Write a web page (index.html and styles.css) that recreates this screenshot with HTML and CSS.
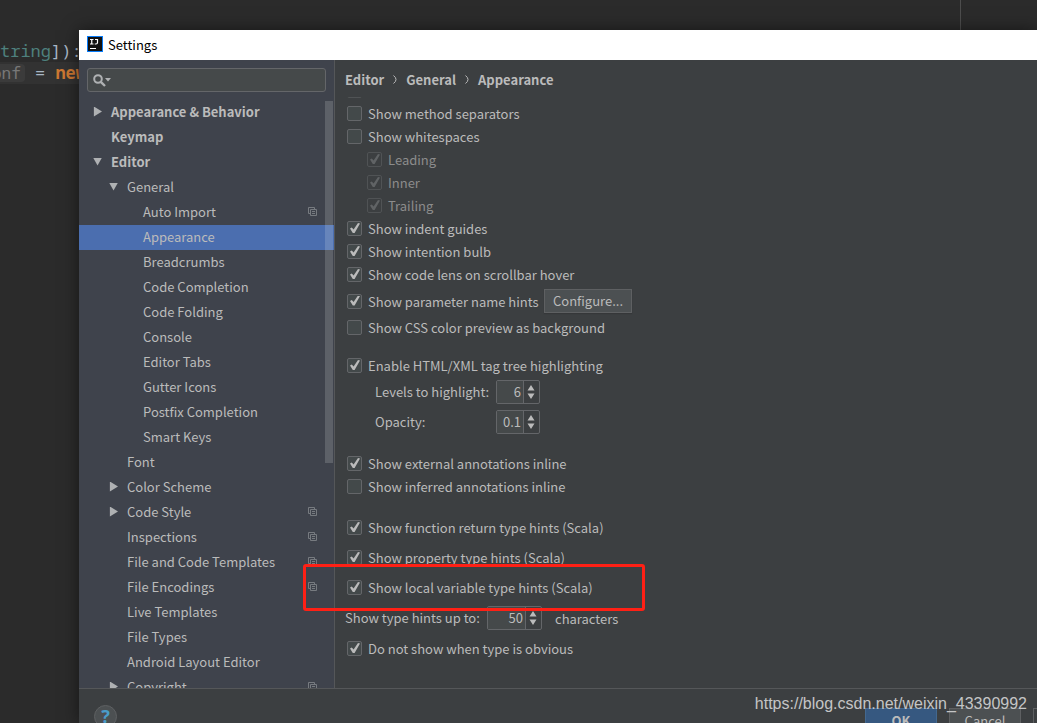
FILE: index.html
```html
<!DOCTYPE html>
<html lang="en">
<head>
    <meta charset="UTF-8">
    <meta name="viewport" content="width=device-width, initial-scale=1.0">
    <title>Settings</title>
    <link rel="stylesheet" href="styles.css">
</head>
<body>
    <svg class="symbols" aria-hidden="true">
        <symbol id="copy" viewBox="0 0 9 9">
            <path d="M2 6.500H.5V.5H6.500V2M2.500 2.500H8.500V8.500H2.500ZM4 4.500H7M4 6.500H7" fill="none" stroke="currentColor"/>
        </symbol>
        <symbol id="spin" viewBox="0 0 8 14">
            <path d="M4 0L7.500 5.500H.5ZM.5 8.500H7.500L4 14Z" fill="currentColor"/>
        </symbol>
    </svg>

    <!-- editor behind the dialog -->
    <div class="code">
        <div class="code-line"><span class="type">tring</span>]):</div>
        <div class="code-line current"><span class="folded">onf</span> = <b>new</b></div>
    </div>
    <div class="margin-guide"></div>

    <div class="window">
        <header class="titlebar">
            <svg class="logo" viewBox="0 0 16 16" aria-hidden="true">
                <rect width="16" height="16" fill="#087cfa"/>
                <rect x="1" y="1" width="14" height="14" fill="#111"/>
                <path d="M3 3.500H6.500M4.750 3.500V8M3 8H6.500M8 3.500H10.500V6.500Q10.500 8 9 8H7.700M3 12.500H9" fill="none" stroke="#fff" stroke-width="1.200"/>
            </svg>
            <span>Settings</span>
        </header>

        <div class="main">
            <nav class="sidebar">
                <div class="search">
                    <svg viewBox="0 0 18 13" aria-hidden="true">
                        <circle cx="5" cy="5" r="3.800" fill="none" stroke="#afb1b3" stroke-width="2"/>
                        <path d="M7.800 7.800L12 12" stroke="#afb1b3" stroke-width="2.400"/>
                        <path d="M12 4H18L15 7.500Z" fill="#afb1b3"/>
                    </svg>
                    <input type="text" aria-label="Search settings">
                </div>
                <ul class="tree">
                    <li class="closed top">Appearance &amp; Behavior</li>
                    <li class="top">Keymap</li>
                    <li class="open top">Editor</li>
                    <li class="open level1">General</li>
                    <li class="level2">Auto Import<svg class="copy"><use href="#copy"/></svg></li>
                    <li class="level2 selected">Appearance</li>
                    <li class="level2">Breadcrumbs</li>
                    <li class="level2">Code Completion</li>
                    <li class="level2">Code Folding</li>
                    <li class="level2">Console</li>
                    <li class="level2">Editor Tabs</li>
                    <li class="level2">Gutter Icons</li>
                    <li class="level2">Postfix Completion</li>
                    <li class="level2">Smart Keys</li>
                    <li class="level1">Font</li>
                    <li class="closed level1">Color Scheme</li>
                    <li class="closed level1">Code Style<svg class="copy"><use href="#copy"/></svg></li>
                    <li class="level1">Inspections<svg class="copy"><use href="#copy"/></svg></li>
                    <li class="level1">File and Code Templates<svg class="copy"><use href="#copy"/></svg></li>
                    <li class="level1">File Encodings<svg class="copy"><use href="#copy"/></svg></li>
                    <li class="level1">Live Templates</li>
                    <li class="level1">File Types</li>
                    <li class="level1">Android Layout Editor</li>
                    <li class="closed level1">Copyright<svg class="copy"><use href="#copy"/></svg></li>
                </ul>
                <div class="scrollbar"></div>
            </nav>

            <main class="content">
                <h1 class="breadcrumb">
                    <span>Editor</span><svg viewBox="0 0 4 9"><path d="M.5 .5Q3 2.500 3 4.500T.5 8.500"/></svg>
                    <span>General</span><svg viewBox="0 0 4 9"><path d="M.5 .5Q3 2.500 3 4.500T.5 8.500"/></svg>
                    <span>Appearance</span>
                </h1>
                <form class="options">
                    <div class="group scrolled">
                        <label class="check"><input type="checkbox" disabled></label>
                        <label class="check"><input type="checkbox">Show method separators</label>
                        <label class="check"><input type="checkbox">Show whitespaces</label>
                        <label class="check nested"><input type="checkbox" checked disabled>Leading</label>
                        <label class="check nested"><input type="checkbox" checked disabled>Inner</label>
                        <label class="check nested"><input type="checkbox" checked disabled>Trailing</label>
                        <label class="check"><input type="checkbox" checked>Show indent guides</label>
                        <label class="check"><input type="checkbox" checked>Show intention bulb</label>
                        <label class="check"><input type="checkbox" checked>Show code lens on scrollbar hover</label>
                        <div class="hints">
                            <label class="check"><input type="checkbox" checked>Show parameter name hints</label>
                            <button type="button" class="configure">Configure...</button>
                        </div>
                        <label class="check"><input type="checkbox">Show CSS color preview as background</label>
                    </div>

                    <div class="group">
                        <label class="check"><input type="checkbox" checked>Enable HTML/XML tag tree highlighting</label>
                        <div class="fields">
                            <label for="levels">Levels to highlight:</label>
                            <span class="spinner"><input type="text" id="levels" value="6"><svg><use href="#spin"/></svg></span>
                            <label for="opacity">Opacity:</label>
                            <span class="spinner"><input type="text" id="opacity" value="0.1"><svg><use href="#spin"/></svg></span>
                        </div>
                    </div>

                    <div class="group">
                        <label class="check"><input type="checkbox" checked>Show external annotations inline</label>
                        <label class="check"><input type="checkbox">Show inferred annotations inline</label>
                    </div>

                    <div class="group spaced">
                        <label class="check"><input type="checkbox" checked>Show function return type hints (Scala)</label>
                        <label class="check"><input type="checkbox" checked>Show property type hints (Scala)</label>
                        <label class="check"><input type="checkbox" checked>Show local variable type hints (Scala)</label>
                        <div class="limit">
                            <label for="limit">Show type hints up to:</label>
                            <span class="spinner wide"><input type="text" id="limit" value="50"><svg><use href="#spin"/></svg></span>
                            <span>characters</span>
                        </div>
                        <label class="check"><input type="checkbox" checked>Do not show when type is obvious</label>
                    </div>
                </form>
            </main>
        </div>

        <footer class="footer">
            <button type="button" class="help">?</button>
            <button type="button" class="action primary">OK</button>
            <button type="button" class="action">Cancel</button>
            <button type="button" class="action apply" aria-label="Apply"></button>
        </footer>

        <div class="marker"></div>
    </div>

    <div class="watermark">https://blog.csdn.net/weixin_43390992</div>
</body>
</html>
```

FILE: styles.css
```css
:root {
    --bg: #3c3f41;
    --sidebar: #3f434c;
    --field: #45494a;
    --line: #555759;
    --border: #646669;
    --text: #bbbbbb;
    --muted: #8c8c8c;
    --selected: #4b6eaf;
}

* {
    box-sizing: border-box;
}

body {
    margin: 0;
    height: 100vh;
    overflow: hidden;
    position: relative;
    background: #2b2b2b;
    color: var(--text);
    font-family: "Noto Sans CJK SC", "Noto Sans", sans-serif;
    font-size: 13px;
    line-height: 23px;
}

input,
button {
    font: inherit;
    color: inherit;
}

.symbols {
    display: none;
}

/* editor */
.code {
    padding-top: 40px;
    font-family: "Noto Sans Mono", "DejaVu Sans Mono", monospace;
    font-size: 17px;
    line-height: 22px;
    color: #a9b7c6;
}

.code-line {
    white-space: pre;
}

.code-line.current {
    background: #323232;
}

.code .type {
    color: #4e807d;
}

.code .folded {
    display: inline-block;
    padding-right: 4px;
    margin-left: -8px;
    border-radius: 4px;
    background: #3b3b3b;
    color: #787878;
    font-size: 16px;
    line-height: 18px;
}

.code b {
    color: #cc7832;
}

.margin-guide {
    position: absolute;
    top: 0;
    right: 76px;
    width: 1px;
    height: 30px;
    background: #4d4d4d;
}

/* dialog */
.window {
    position: absolute;
    top: 30px;
    left: 79px;
    right: 0;
    bottom: 0;
    display: flex;
    flex-direction: column;
    background: var(--bg);
    box-shadow: 0 0 16px rgba(0, 0, 0, 0.5);
}

.titlebar {
    display: flex;
    align-items: center;
    gap: 5px;
    height: 30px;
    flex-shrink: 0;
    padding: 0 8px 2px;
    background: #fff;
    color: #000;
}

.logo {
    width: 16px;
    height: 16px;
}

.main {
    display: flex;
    flex: 1;
    min-height: 0;
}

/* tree */
.sidebar {
    position: relative;
    width: 256px;
    flex-shrink: 0;
    padding-top: 8px;
    overflow: hidden;
    background: var(--sidebar);
    border-right: 1px solid var(--line);
}

.search {
    display: flex;
    align-items: center;
    height: 24px;
    margin: 0 8px;
    padding-left: 5px;
    border: 1px solid var(--border);
    border-radius: 3px;
    background: var(--field);
}

.search svg {
    width: 18px;
    height: 13px;
    flex-shrink: 0;
}

.search input {
    flex: 1;
    min-width: 0;
    border: 0;
    background: none;
    outline: none;
}

.tree {
    margin: 8px 0 0;
    padding: 0;
    list-style: none;
}

.tree li {
    display: flex;
    align-items: center;
    height: 25px;
    padding: 0 17px 2px 14px;
}

.tree li::before {
    content: "";
    width: 9px;
    height: 8px;
    margin-right: 9px;
}

.tree .closed::before,
.tree .open::before {
    background: #afb1b3;
}

.tree .closed::before {
    height: 10px;
    clip-path: polygon(10% 0, 100% 50%, 10% 100%);
}

.tree .open::before {
    clip-path: polygon(0 0, 100% 0, 50% 100%);
}

.tree .top {
    font-weight: bold;
}

.tree .level1 {
    padding-left: 30px;
}

.tree .level2 {
    padding-left: 46px;
}

.tree .selected {
    background: var(--selected);
}

.copy {
    width: 9px;
    height: 9px;
    margin-left: auto;
    color: #777b80;
}

.scrollbar {
    position: absolute;
    top: 41px;
    right: 1px;
    width: 8px;
    height: 362px;
    background: rgba(255, 255, 255, 0.16);
}

/* options */
.content {
    display: flex;
    flex-direction: column;
    flex: 1;
    min-width: 0;
    padding-left: 10px;
}

.breadcrumb {
    display: flex;
    align-items: center;
    gap: 9px;
    height: 37px;
    flex-shrink: 0;
    margin: 0;
    padding-top: 2px;
    font-size: 13px;
}

.breadcrumb svg {
    width: 4px;
    height: 9px;
    fill: none;
    stroke: var(--text);
}

.options {
    flex: 1;
    min-height: 0;
    overflow: hidden;
}

.group {
    display: flex;
    flex-direction: column;
    align-items: flex-start;
    margin-bottom: 18px;
}

.group.scrolled {
    margin-top: -18px;
    margin-bottom: 15px;
}

.group.spaced {
    gap: 7px;
}

.check {
    display: flex;
    align-items: center;
    gap: 6px;
    height: 23px;
    padding-left: 2px;
    line-height: 21px;
}

.check.nested {
    padding-left: 22px;
    color: var(--muted);
}

.check input {
    appearance: none;
    width: 15px;
    height: 15px;
    margin: 0;
    border: 1px solid var(--border);
    border-radius: 2px;
    background: #43494a;
}

.check input:checked::after {
    content: "";
    display: block;
    width: 10px;
    height: 10px;
    margin: 1px 1px 1px 2px;
    background: #bbb;
    clip-path: polygon(0 54%, 18% 44%, 36% 66%, 80% 0, 100% 6%, 46% 100%, 28% 100%);
}

.check input:disabled {
    border-color: #505355;
    background: var(--bg);
}

.check input:disabled::after {
    background: #606365;
}

.hints {
    display: grid;
    grid-template-columns: 199px auto;
    align-items: center;
    margin: 3px 0;
}

.configure {
    width: 88px;
    height: 24px;
    padding: 0;
    border: 1px solid #5e6062;
    background: #4c5052;
    box-shadow: 0 1px 1px #353739;
    line-height: 20px;
}

.fields {
    display: grid;
    grid-template-columns: 121px auto;
    align-items: center;
    row-gap: 6px;
    margin-top: 3px;
    padding-left: 30px;
}

.fields label,
.limit label {
    height: 24px;
}

.spinner {
    display: flex;
    align-items: center;
    width: 44px;
    height: 24px;
    border: 1px solid var(--border);
    border-radius: 2px;
}

.spinner.wide {
    width: 55px;
}

.spinner input {
    flex: 1;
    min-width: 0;
    height: 22px;
    padding: 0 2px 2px;
    border: 0;
    border-right: 1px solid var(--border);
    background: var(--field);
    text-align: right;
}

.spinner svg {
    width: 8px;
    height: 14px;
    flex-shrink: 0;
    margin: 0 4px 0 3px;
}

.limit {
    display: grid;
    grid-template-columns: 142px 68px auto;
    align-items: center;
}

/* buttons */
.footer {
    display: flex;
    align-items: flex-start;
    gap: 12px;
    height: 35px;
    flex-shrink: 0;
    padding: 19px 0 0 15px;
    overflow: hidden;
    border-top: 1px solid var(--line);
}

.help {
    width: 23px;
    height: 23px;
    flex-shrink: 0;
    margin: -3px auto 0 0;
    padding: 0;
    border: 1px solid #5e6062;
    border-radius: 50%;
    background: #4c5052;
    color: #4a9cc9;
    font-family: "Noto Sans", sans-serif;
    font-size: 18px;
    font-weight: bold;
    line-height: 21px;
}

.action {
    width: 72px;
    height: 24px;
    flex-shrink: 0;
    padding: 0;
    border: 1px solid #5e6062;
    background: #4c5052;
}

.action.primary {
    border-color: #43688f;
    background: #365880;
    font-weight: bold;
}

.action.apply {
    width: 4px;
    border-right: 0;
    background: none;
}

/* highlight over the local variable option */
.marker {
    position: absolute;
    top: 534px;
    left: 224px;
    width: 342px;
    height: 47px;
    border: 3px solid #ff2015;
    border-radius: 3px;
}

.watermark {
    position: absolute;
    right: 10px;
    bottom: 8px;
    color: #c4c5c6;
    font-family: "Liberation Sans", sans-serif;
    font-size: 16px;
}
```
